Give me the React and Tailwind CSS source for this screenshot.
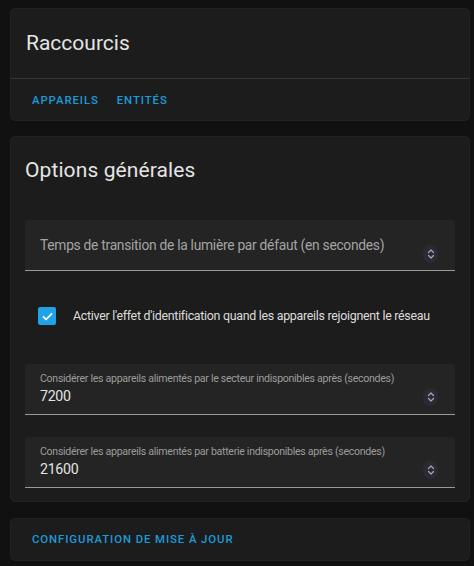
import React from 'react';

const Spinner = () => (
  <div className="w-[15px] h-[18px] rounded-full bg-[#2a2a33] flex items-center justify-center">
    <svg width="8" height="12" viewBox="0 0 8 12" fill="none" stroke="#a4a4b4" strokeWidth="1.3" strokeLinecap="round" strokeLinejoin="round">
      <path d="M1.5 4.5 L4 2 L6.5 4.5" />
      <path d="M1.5 7.5 L4 10 L6.5 7.5" />
    </svg>
  </div>
);

const NumberField = ({ label, value }) => (
  <div className="h-[51px] bg-[#242424] rounded-t-[4px] border-b border-[#9a9a9a] flex items-center pl-[15px] pr-[17px]">
    <div className="flex-1 min-w-0">
      <div className="text-[10.6px] leading-[14px] tracking-[-0.3px] text-[#9c9c9c] whitespace-nowrap">{label}</div>
      <div className="text-[14.2px] leading-[20px] tracking-[-0.3px] text-[#e3e3e3]">{value}</div>
    </div>
    <div className="mt-[16px]"><Spinner /></div>
  </div>
);

export default function App() {
  return (
    <div className="min-h-[566px] bg-[#111111] pl-[10px] pr-[4px] pt-[8px] pb-[7px] font-['Roboto',sans-serif]">
      <div className="bg-[#1c1c1c] rounded-[5px] border border-[#222222]">
        <div className="px-[15px] pt-[20px] pb-[21px]">
          <h2 className="text-[21px] leading-[28px] text-[#e4e4e4]">Raccourcis</h2>
        </div>
        <div className="border-t border-[#343434] h-[42px] flex items-center gap-[18px] px-[21px] pt-[2px]">
          <span className="text-[11.4px] font-medium tracking-[0.9px] text-[#1c9ad8]">APPAREILS</span>
          <span className="text-[11.4px] font-medium tracking-[0.9px] text-[#1c9ad8]">ENTITÉS</span>
        </div>
      </div>

      <div className="mt-[15px] bg-[#1c1c1c] rounded-[5px] border border-[#222222] px-[14px] pt-[19px] pb-[13px]">
        <h2 className="text-[21px] leading-[28px] text-[#e4e4e4] tracking-[0.1px]">Options générales</h2>

        <div className="mt-[36px] h-[51px] bg-[#242424] rounded-t-[4px] border-b border-[#9a9a9a] flex items-center pl-[15px] pr-[17px]">
          <div className="flex-1 text-[13.8px] tracking-[-0.28px] text-[#a3a3a3] whitespace-nowrap">Temps de transition de la lumière par défaut (en secondes)</div>
          <div className="mt-[17px]"><Spinner /></div>
        </div>

        <div className="mt-[36px] flex items-center pl-[13px]">
          <div className="w-[18px] h-[18px] rounded-[2px] bg-[#1ea2e8] flex items-center justify-center">
            <svg width="13" height="13" viewBox="0 0 24 24" fill="none" stroke="#ffffff" strokeWidth="3.2" strokeLinecap="round" strokeLinejoin="round">
              <path d="M4.5 12.5 L9.5 17.5 L19.5 7" />
            </svg>
          </div>
          <span className="ml-[17px] text-[12.4px] tracking-[-0.28px] text-[#dcdcdc] whitespace-nowrap">Activer l'effet d'identification quand les appareils rejoignent le réseau</span>
        </div>

        <div className="mt-[38px]">
          <NumberField label="Considérer les appareils alimentés par le secteur indisponibles après (secondes)" value="7200" />
        </div>
        <div className="mt-[22px]">
          <NumberField label="Considérer les appareils alimentés par batterie indisponibles après (secondes)" value="21600" />
        </div>
      </div>

      <div className="mt-[16px] bg-[#1c1c1c] rounded-[5px] border border-[#222222] h-[43px] flex items-center px-[21px]">
        <span className="text-[11.4px] font-medium tracking-[0.9px] text-[#1c9ad8]">CONFIGURATION DE MISE À JOUR</span>
      </div>
    </div>
  );
}
